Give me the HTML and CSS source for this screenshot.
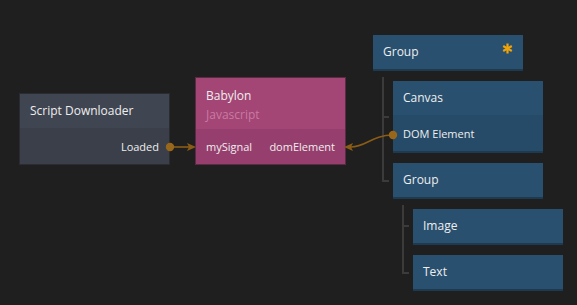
FILE: index.html
```html
<!DOCTYPE html>
<html>
<head>
<meta charset="utf-8">
<link rel="stylesheet" href="styles.css">
</head>
<body>
<div class="canvas">
  <div class="node gray n-script">
    <div class="head"><span class="title">Script Downloader</span></div>
    <div class="ports right"><span>Loaded</span></div>
  </div>

  <div class="node pink n-babylon">
    <div class="head tall">
      <span class="title">Babylon</span>
      <span class="sub">Javascript</span>
    </div>
    <div class="ports split"><span>mySignal</span><span>domElement</span></div>
  </div>

  <div class="node blue n-group1">
    <div class="head"><span class="title">Group</span>
      <svg class="star" width="11" height="11" viewBox="0 0 11 11">
        <g stroke="#f0a30a" stroke-width="2.2" stroke-linecap="butt">
          <path d="M5.5 0.5 V10.5"/>
          <path d="M1.2 3 L9.8 8"/>
          <path d="M1.2 8 L9.8 3"/>
        </g>
      </svg>
    </div>
  </div>

  <div class="node blue n-canvas">
    <div class="head"><span class="title">Canvas</span></div>
    <div class="ports left"><span>DOM Element</span></div>
  </div>

  <div class="node blue n-group2">
    <div class="head"><span class="title">Group</span></div>
  </div>

  <div class="node blue n-image">
    <div class="head"><span class="title">Image</span></div>
  </div>

  <div class="node blue n-text">
    <div class="head"><span class="title">Text</span></div>
  </div>

  <svg class="wires" width="577" height="305" viewBox="0 0 577 305">
    <g stroke="#3b3b3b" stroke-width="2" fill="none">
      <path d="M383 77 V181 H389"/>
      <path d="M383 117 H389"/>
      <path d="M403 205 V273 H409"/>
      <path d="M403 226 H409"/>
    </g>
    <g stroke="#8a5c16" stroke-width="1.6" fill="none">
      <path d="M170 147 H190"/>
      <path d="M393 135 C372 135 366 147 351 147"/>
    </g>
    <g fill="#8a5c16">
      <path d="M196 147 L187 143 L189 147 L187 151 Z"/>
      <path d="M344 147 L353 143 L351 147 L353 151 Z"/>
    </g>
    <g fill="#99671a">
      <circle cx="170" cy="147" r="4.2"/>
      <circle cx="393" cy="135" r="4.2"/>
    </g>
  </svg>
</div>
</body>
</html>
```

FILE: styles.css
```css
html, body {
  margin: 0;
  padding: 0;
  background: #1f1f1f;
}
.canvas {
  position: relative;
  width: 577px;
  height: 305px;
  overflow: hidden;
  background: #1f1f1f;
  font-family: "Open Sans", "Noto Sans", sans-serif;
  color: #eeeeee;
}
.wires {
  position: absolute;
  left: 0;
  top: 0;
  z-index: 2;
  pointer-events: none;
}
.node {
  position: absolute;
  width: 150px;
  display: flex;
  flex-direction: column;
  box-sizing: border-box;
  z-index: 1;
}
.head {
  height: 35px;
  display: flex;
  align-items: center;
  justify-content: space-between;
  padding: 0 10px;
  box-sizing: border-box;
}
.head.tall {
  flex-direction: column;
  align-items: flex-start;
  justify-content: flex-start;
  padding-top: 8px;
}
.title {
  font-size: 12px;
  line-height: 18px;
}
.head.tall .title,
.head.tall .sub {
  line-height: 19px;
}
.sub {
  font-size: 12px;
  color: #c97aa3;
}
.star {
  display: block;
  align-self: flex-start;
  margin-top: 8px;
  margin-right: 0;
}
.ports {
  height: 36px;
  display: flex;
  align-items: center;
  font-size: 11px;
  padding: 0 10px;
  box-sizing: border-box;
}
.ports.right { justify-content: flex-end; }
.ports.left { justify-content: flex-start; }
.ports.split { justify-content: space-between; }

.gray {
  background: #3b3f4a;
  border: 1px solid #2a2c31;
}
.gray .head { background: #404552; height: 34px; }
.gray .ports { height: 36px; padding-right: 10px; }

.pink {
  background: #963e6d;
  border: 1px solid #5c2a45;
}
.pink .head { background: #a34575; height: 51px; }
.pink .ports { height: 35px; }

.blue {
  background: #27506f;
  border-bottom: 2px solid #1d3a51;
}
.blue .head { background: #29506f; height: 34px; }
.blue .ports { background: #264b69; height: 36px; }

.n-script { left: 19px; top: 93px; width: 151px; }
.n-babylon { left: 195px; top: 77px; width: 151px; }
.n-group1 { left: 373px; top: 35px; }
.n-canvas { left: 393px; top: 81px; }
.n-group2 { left: 393px; top: 163px; }
.n-image { left: 413px; top: 209px; }
.n-text { left: 413px; top: 255px; }
```
